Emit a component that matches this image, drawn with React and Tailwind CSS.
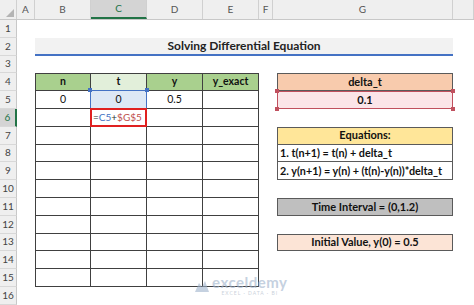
import React from "react";

const cols = [
  { key: "A", w: "w-[18px]" },
  { key: "B", w: "w-[56px]" },
  { key: "C", w: "w-[56px]" },
  { key: "D", w: "w-[56px]" },
  { key: "E", w: "w-[56px]" },
  { key: "F", w: "w-[14px]" },
  { key: "G", w: "w-[180px]" },
  { key: "H", w: "flex-1" },
];

const tableCols = ["B", "C", "D", "E"];

const Handle = ({ pos, color }) => (
  <span className={`absolute w-[4px] h-[4px] ${color} ${pos}`} />
);

const TableCell = ({ col, row }) => {
  const base = "h-full border-r border-b border-[#404040] flex items-center justify-center relative";
  const first = col === "B" ? " border-l" : "";
  const top = row === 4 ? " border-t" : "";

  if (row === 4) {
    const bg = col === "C" ? "bg-[#e2efda]" : "bg-[#a9d08e]";
    const label = { B: "n", C: "t", D: "y", E: "y_exact" }[col];
    return <div className={`${base}${first}${top} ${bg} font-bold`}>{label}</div>;
  }
  if (row === 5) {
    const val = { B: "0", C: "0", D: "0.5", E: "" }[col];
    if (col === "C") {
      return (
        <div className={`${base} bg-[#dde8f5]`}>
          <div className="absolute inset-[-1px] border border-[#4472c4]" />
          <Handle pos="left-[-3px] top-[-3px]" color="bg-[#4472c4]" />
          <Handle pos="right-[-3px] top-[-3px]" color="bg-[#4472c4]" />
          {val}
        </div>
      );
    }
    return <div className={`${base}${first}`}>{val}</div>;
  }
  if (row === 6 && col === "C") {
    return (
      <div className={`${base} justify-start`}>
        <div className="absolute inset-x-[-1px] top-[-1px] bottom-[-1px] border-2 border-[#e02020]" />
        <span className="pl-[2px] text-[10px]">
          <span className="text-[#333]">=</span>
          <span className="text-[#4472c4]">C5</span>
          <span className="text-[#333]">+</span>
          <span className="text-[#c0504d]">$G$5</span>
        </span>
      </div>
    );
  }
  return <div className={`${base}${first}`} />;
};

const GCell = ({ row }) => {
  const box = "ml-[4px] w-[176px] h-full flex items-center relative font-bold";
  if (row === 4)
    return <div className={`${box} justify-center border border-[#5a5a5a] bg-[#f8cbad] text-[11px]`}>delta_t</div>;
  if (row === 5)
    return (
      <div className={`${box} justify-center border border-[#c0505e] bg-[#fbe5e8] text-[11px]`}>
        <Handle pos="left-[-3px] top-[-3px]" color="bg-[#c0505e]" />
        <Handle pos="right-[-3px] top-[-3px]" color="bg-[#c0505e]" />
        <Handle pos="left-[-3px] bottom-[-3px]" color="bg-[#c0505e]" />
        <Handle pos="right-[-3px] bottom-[-3px]" color="bg-[#c0505e]" />
        0.1
      </div>
    );
  if (row === 7)
    return <div className={`${box} justify-center border border-[#5a5a5a] bg-[#ffe699] text-[11px]`}>Equations:</div>;
  if (row === 8)
    return <div className={`${box} border-x border-b border-[#5a5a5a] pl-[2px] text-[10.8px]`}>1. t(n+1) = t(n) + delta_t</div>;
  if (row === 9)
    return (
      <div className={`${box} border-x border-b border-[#5a5a5a] pl-[2px] text-[10.8px]`}>
        2. y(n+1) = y(n) + (t(n)-y(n))*delta_t
      </div>
    );
  if (row === 11)
    return <div className={`${box} justify-center border border-[#5a5a5a] bg-[#bfbfbf] text-[11px]`}>Time Interval = (0,1.2)</div>;
  if (row === 13)
    return <div className={`${box} justify-center border border-[#5a5a5a] bg-[#fce4d6] text-[11px]`}>Initial Value, y(0) = 0.5</div>;
  return null;
};

const Row = ({ row }) => {
  const selected = row === 6;
  return (
    <div className="flex h-[17.8px]">
      <div
        className={`w-[17px] shrink-0 flex items-center justify-center text-[10px] text-[#444] border-b border-[#d8d8d8] ${
          selected ? "bg-[#d4d4d4] border-r-2 border-r-[#217346] text-[#217346]" : "bg-[#efefef] border-r border-r-[#c8c8c8]"
        }`}
      >
        {row}
      </div>
      {row === 2 ? (
        <>
          <div className="w-[18px] shrink-0" />
          <div className="w-[418px] shrink-0 h-full bg-[#f2f2f2] border-b-2 border-[#4472c4] flex items-center justify-center font-bold text-[12px] text-[#222]">
            Solving Differential Equation
          </div>
          <div className="flex-1" />
        </>
      ) : (
        cols.map((c) => (
          <div key={c.key} className={`${c.w} shrink-0 h-full`}>
            {row >= 4 && row <= 15 && tableCols.includes(c.key) && <TableCell col={c.key} row={row} />}
            {c.key === "G" && <GCell row={row} />}
          </div>
        ))
      )}
    </div>
  );
};

export default function App() {
  const rows = Array.from({ length: 16 }, (_, i) => i + 1);
  return (
    <div
      className="relative w-[474px] h-[305px] overflow-hidden bg-white text-[10.5px] text-[#111]"
      style={{ fontFamily: "Lato, 'Open Sans', sans-serif" }}
    >
      <div className="flex h-[20px] bg-[#efefef] border-b border-[#c8c8c8] text-[10px] text-[#555]">
        <div className="w-[17px] shrink-0 relative border-r border-[#d0d0d0]">
          <span className="absolute right-[2px] bottom-[2px] w-0 h-0 border-l-[8px] border-l-transparent border-b-[8px] border-b-[#b4b4b4]" />
        </div>
        {cols.map((c) => (
          <div
            key={c.key}
            className={`${c.w} shrink-0 flex items-center justify-center border-r border-[#d0d0d0] ${
              c.key === "C" ? "bg-[#d4d4d4] border-b-2 border-b-[#217346] text-[#217346]" : ""
            }`}
          >
            {c.key === "H" ? "" : c.key}
          </div>
        ))}
      </div>
      {rows.map((r) => (
        <Row key={r} row={r} />
      ))}
      <div className="absolute left-[194px] top-[275px] flex items-center gap-[2px] opacity-60 pointer-events-none">
        <svg width="16" height="14" viewBox="0 0 16 14">
          <path d="M1 13 L5 4 L8 8 L11 2 L15 13 Z" fill="#9fb3cc" />
        </svg>
        <div className="flex flex-col items-center">
          <span className="text-[15px] leading-[14px] font-bold text-[#9fb3cc] tracking-[0.5px]">exceldemy</span>
          <span className="mt-[2px] text-[5px] leading-[5px] text-[#a8b4c4] tracking-[1px]">EXCEL · DATA · BI</span>
        </div>
      </div>
    </div>
  );
}
